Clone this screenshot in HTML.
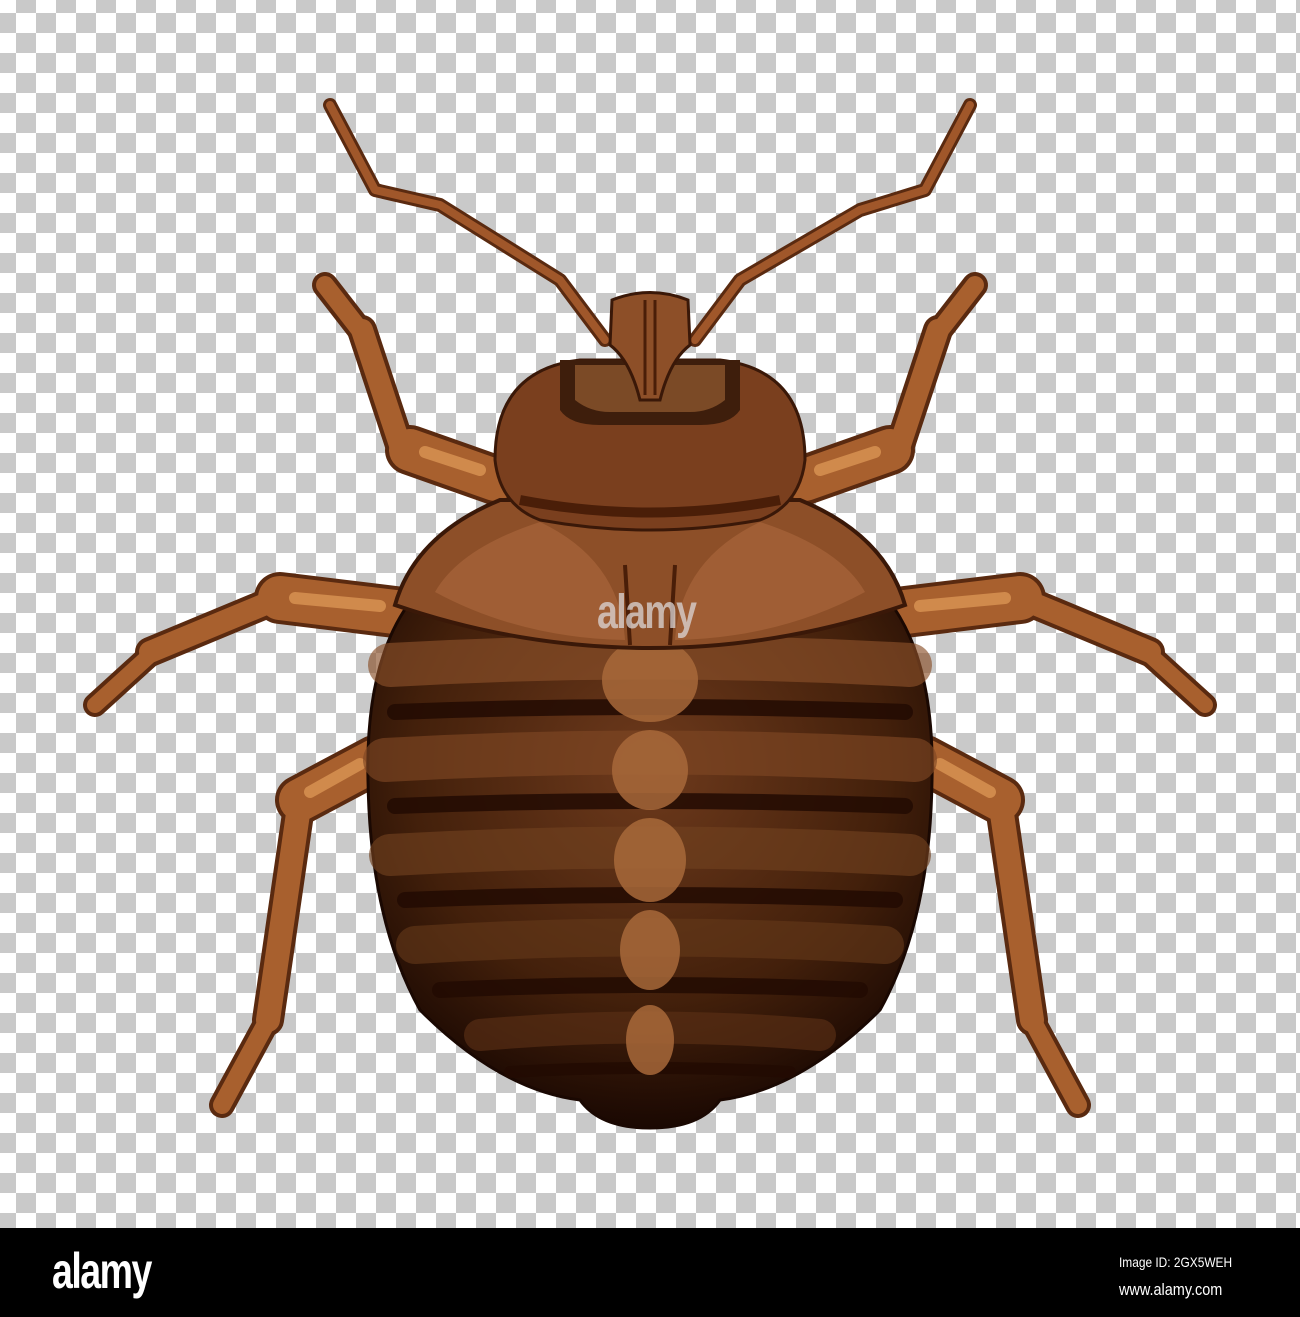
<!DOCTYPE html>
<html><head><meta charset="utf-8"><style>
html,body{margin:0;padding:0;width:1300px;height:1317px;overflow:hidden;background:#fff}
svg{display:block}
.bar{position:absolute;left:0;top:1228px;width:1300px;height:89px;background:#000;color:#fff;font-family:"Liberation Sans",sans-serif}
.wm{position:absolute;left:597px;top:585px;font-family:"Liberation Sans",sans-serif;font-weight:bold;font-size:48px;color:rgba(220,215,215,0.75);transform:scaleX(0.78);transform-origin:left;letter-spacing:-2px}
</style></head><body>
<svg width="1300" height="1317" viewBox="0 0 1300 1317" xmlns="http://www.w3.org/2000/svg">
<defs>
<pattern id="ck" x="-4" y="-7" width="40" height="40" patternUnits="userSpaceOnUse">
<rect width="40" height="40" fill="#fff"/>
<rect x="20" y="0" width="20" height="20" fill="#c9c9c9"/>
<rect x="0" y="20" width="20" height="20" fill="#c9c9c9"/>
</pattern>
<radialGradient id="bd" cx="0.5" cy="0.35" r="0.65">
<stop offset="0" stop-color="#6e3a1c"/><stop offset="0.65" stop-color="#43200b"/><stop offset="1" stop-color="#1a0802"/>
</radialGradient>
</defs>
<rect width="1300" height="1228" fill="url(#ck)"/>
<g stroke-linecap="round" stroke-linejoin="round" fill="none">
<g stroke="#5a2a10" stroke-width="14">
<polyline points="605,340 560,280 440,205 375,190 330,105"/>
<polyline points="695,340 740,280 860,210 925,190 970,105"/>
</g>
<g stroke="#a0572a" stroke-width="8">
<polyline points="605,340 560,280 440,205 375,190 330,105"/>
<polyline points="695,340 740,280 860,210 925,190 970,105"/>
</g>
<g stroke="#5a2a10">
<polyline stroke-width="26" points="360,330 325,285"/><polyline stroke-width="26" points="940,330 975,285"/>
<polyline stroke-width="30" points="400,445 362,330"/><polyline stroke-width="30" points="900,445 938,330"/>
<polyline stroke-width="50" points="495,480 410,450"/><polyline stroke-width="50" points="805,480 890,450"/>
<polyline stroke-width="24" points="150,655 95,705"/><polyline stroke-width="24" points="1150,655 1205,705"/>
<polyline stroke-width="30" points="280,598 150,652"/><polyline stroke-width="30" points="1020,598 1150,652"/>
<polyline stroke-width="52" points="395,612 280,598"/><polyline stroke-width="52" points="905,612 1020,598"/>
<polyline stroke-width="26" points="268,1020 222,1105"/><polyline stroke-width="26" points="1032,1020 1078,1105"/>
<polyline stroke-width="32" points="300,800 268,1020"/><polyline stroke-width="32" points="1000,800 1032,1020"/>
<polyline stroke-width="50" points="375,760 300,800"/><polyline stroke-width="50" points="925,760 1000,800"/>
</g>
<g stroke="#a8602e">
<polyline stroke-width="18" points="360,330 325,285"/><polyline stroke-width="18" points="940,330 975,285"/>
<polyline stroke-width="22" points="400,445 362,330"/><polyline stroke-width="22" points="900,445 938,330"/>
<polyline stroke-width="42" points="495,480 410,450"/><polyline stroke-width="42" points="805,480 890,450"/>
<polyline stroke-width="16" points="150,655 95,705"/><polyline stroke-width="16" points="1150,655 1205,705"/>
<polyline stroke-width="22" points="280,598 150,652"/><polyline stroke-width="22" points="1020,598 1150,652"/>
<polyline stroke-width="44" points="395,612 280,598"/><polyline stroke-width="44" points="905,612 1020,598"/>
<polyline stroke-width="18" points="268,1020 222,1105"/><polyline stroke-width="18" points="1032,1020 1078,1105"/>
<polyline stroke-width="24" points="300,800 268,1020"/><polyline stroke-width="24" points="1000,800 1032,1020"/>
<polyline stroke-width="42" points="375,760 300,800"/><polyline stroke-width="42" points="925,760 1000,800"/>
</g>
<g stroke="#d08a4c" stroke-width="12">
<polyline points="480,470 425,452"/><polyline points="820,470 875,452"/>
<polyline points="380,606 295,598"/><polyline points="920,606 1005,598"/>
<polyline points="360,764 310,792"/><polyline points="940,764 990,792"/>
</g>
</g>
<path d="M420,590 Q650,560 880,590 Q935,650 932,780 Q930,920 880,1010 Q800,1090 720,1100 Q700,1128 650,1128 Q600,1128 580,1100 Q500,1090 420,1010 Q370,920 368,780 Q365,650 420,590Z" fill="url(#bd)" stroke="#1a0802" stroke-width="3"/>
<g fill="none" stroke-linecap="round">
<path d="M390,665 Q650,650 910,665" stroke="#8a5029" stroke-width="44" opacity="0.65"/>
<path d="M385,760 Q650,745 915,760" stroke="#7e4724" stroke-width="44" opacity="0.65"/>
<path d="M390,855 Q650,840 910,855" stroke="#70401f" stroke-width="42" opacity="0.65"/>
<path d="M415,945 Q650,930 885,945" stroke="#623719" stroke-width="38" opacity="0.65"/>
<path d="M480,1035 Q650,1020 820,1035" stroke="#5a3016" stroke-width="32" opacity="0.65"/>
<path d="M395,712 Q650,702 905,712" stroke="#220a02" stroke-width="16" opacity="0.85"/>
<path d="M395,806 Q650,796 905,806" stroke="#220a02" stroke-width="16" opacity="0.85"/>
<path d="M405,900 Q650,890 895,900" stroke="#220a02" stroke-width="16" opacity="0.85"/>
<path d="M440,990 Q650,980 860,990" stroke="#220a02" stroke-width="16" opacity="0.85"/>
<path d="M510,1072 Q650,1064 790,1072" stroke="#220a02" stroke-width="12" opacity="0.85"/>
</g>
<g fill="#a8693a" opacity="0.85">
<ellipse cx="650" cy="680" rx="48" ry="42"/>
<ellipse cx="650" cy="770" rx="38" ry="40"/>
<ellipse cx="650" cy="860" rx="36" ry="42"/>
<ellipse cx="650" cy="950" rx="30" ry="40"/>
<ellipse cx="650" cy="1040" rx="24" ry="35"/>
</g>
<path d="M395,605 Q415,535 500,500 L800,500 Q885,535 905,605 Q780,648 650,648 Q520,648 395,605Z" fill="#8d4f28" stroke="#3a1808" stroke-width="4"/>
<path d="M435,592 Q460,548 540,522 Q620,560 625,640 Q520,638 435,592Z" fill="#a8653a" opacity="0.7"/>
<path d="M865,592 Q840,548 760,522 Q680,560 675,640 Q780,638 865,592Z" fill="#a8653a" opacity="0.7"/>
<path d="M625,565 L630,645 M675,565 L670,645" stroke="#4a1e08" stroke-width="4"/>
<path d="M495,460 Q495,370 580,360 L720,360 Q805,370 805,460 Q800,505 760,520 Q650,540 540,520 Q500,505 495,460Z" fill="#7a3f1e" stroke="#3a1808" stroke-width="3"/>
<path d="M520,500 Q650,525 780,500" stroke="#4a1e08" stroke-width="10" fill="none"/>
<path d="M560,360 L740,360 L740,410 Q730,425 700,425 L600,425 Q570,425 560,410Z" fill="#3e1e0c"/>
<path d="M575,365 L725,365 L725,400 Q710,412 690,412 L610,412 Q590,412 575,400Z" fill="#7b4a26"/>
<path d="M612,300 Q650,285 688,300 L690,345 Q670,360 660,400 L640,400 Q630,360 610,345Z" fill="#8d4f28" stroke="#3a1808" stroke-width="3"/>
<path d="M645,300 L645,395 M655,300 L655,395" stroke="#4a1e08" stroke-width="3"/>
</svg>
<div class="wm">alamy</div>
<div class="bar">
<div style="position:absolute;left:52px;top:14px;font-size:50px;font-weight:bold;letter-spacing:-2px;transform:scaleX(0.75);transform-origin:left">alamy</div>
<div style="position:absolute;left:1119px;top:26px;font-size:14px;transform:scaleX(0.85);transform-origin:left">Image ID: 2GX5WEH</div>
<div style="position:absolute;left:1119px;top:52px;font-size:17px;transform:scaleX(0.85);transform-origin:left">www.alamy.com</div>
</div>
</body></html>
